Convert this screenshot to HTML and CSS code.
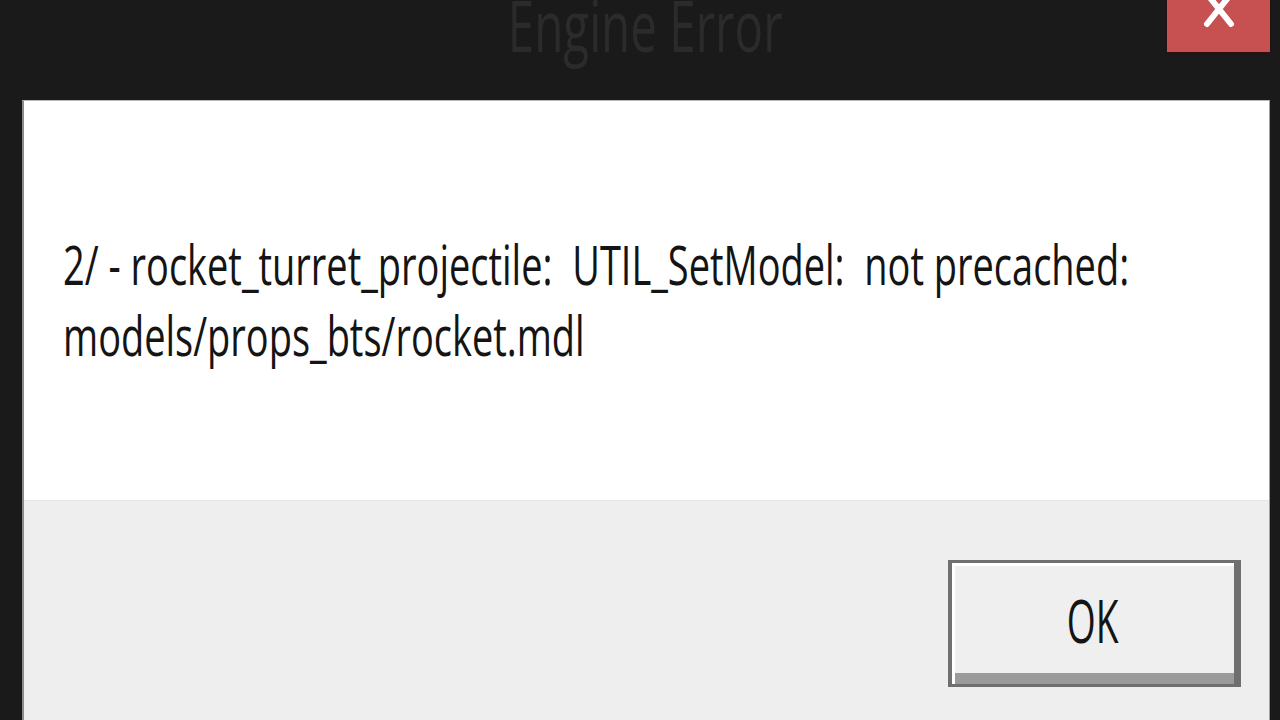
FILE: index.html
```html
<!DOCTYPE html>
<html>
<head>
<meta charset="utf-8">
<link rel="stylesheet" href="styles.css">
</head>
<body>
<div class="window">
  <div class="titlebar">
    <div class="title"><span class="title-text">Engine Error</span></div>
    <div class="close-btn">
      <svg width="40" height="32" viewBox="0 0 40 32"><path d="M8 -6 L32 24 M32 -6 L8 24" stroke="#ffffff" stroke-width="6" stroke-linecap="round" fill="none"/></svg>
    </div>
  </div>
  <div class="dialog">
    <div class="content">
      <p class="message"><span class="line">2/ - rocket_turret_projectile:&nbsp; UTIL_SetModel:&nbsp; not precached:</span><span class="line">models/props_bts/rocket.mdl</span></p>
    </div>
    <div class="footer">
      <button class="ok-btn"><span class="ok-inner"><span class="ok-text">OK</span></span></button>
    </div>
  </div>
</div>
</body>
</html>
```

FILE: styles.css
```css
html, body {
  margin: 0;
  padding: 0;
}
body {
  width: 1280px;
  height: 720px;
  overflow: hidden;
  background: #1a1a1a;
  font-family: "Open Sans", "Noto Sans", sans-serif;
}
.window {
  display: flex;
  flex-direction: column;
  height: 720px;
}
.titlebar {
  height: 100px;
  display: flex;
  align-items: flex-start;
  padding-left: 123px;
  padding-right: 10px;
  flex-shrink: 0;
}
.title {
  flex: 1;
  text-align: center;
  height: 100px;
}
.title-text {
  display: inline-block;
  color: #2b2b2b;
  font-size: 72px;
  line-height: 48px;
  transform: scaleX(0.66);
}
.close-btn {
  width: 103px;
  height: 52px;
  background: #c75050;
  box-shadow: 0 1px 2px rgba(80, 0, 0, 0.6);
  display: flex;
  justify-content: center;
  align-items: flex-start;
}
.dialog {
  margin-left: 22px;
  width: 1245px;
  flex: 1;
  display: flex;
  flex-direction: column;
  border-left: 2px solid #8c8c8c;
  border-top: 1px solid #b8b8b8;
  border-right: 1px solid #a0a0a0;
  background: #efefef;
}
.content {
  height: 399px;
  background: #ffffff;
  padding-left: 39px;
  box-sizing: border-box;
  padding-top: 128px;
}
.message {
  margin: 0;
  color: #141414;
  font-size: 54px;
  line-height: 71px;
}
.line {
  display: block;
  white-space: nowrap;
  transform-origin: left center;
  transform: scaleX(0.703);
}
.footer {
  flex: 1;
  background: #eeeeee;
  border-top: 1px solid #e6e6e6;
  padding-top: 59px;
  padding-right: 28px;
  display: flex;
  justify-content: flex-end;
  align-items: flex-start;
}
.ok-btn {
  width: 293px;
  height: 127px;
  margin: 0;
  background: #6f6f6f;
  border: none;
  padding: 3px 7px 3px 4px;
  box-sizing: border-box;
  display: flex;
  font-family: "Open Sans", "Noto Sans", sans-serif;
}
.ok-inner {
  flex: 1;
  background: #efefef;
  box-shadow: inset 3px 3px 0 #ffffff, inset 0 -11px 0 #9a9a9a;
  display: flex;
  justify-content: center;
  align-items: center;
  padding-bottom: 8px;
}
.ok-text {
  display: inline-block;
  color: #141414;
  font-size: 60px;
  line-height: 60px;
  transform: scaleX(0.62);
}
```
